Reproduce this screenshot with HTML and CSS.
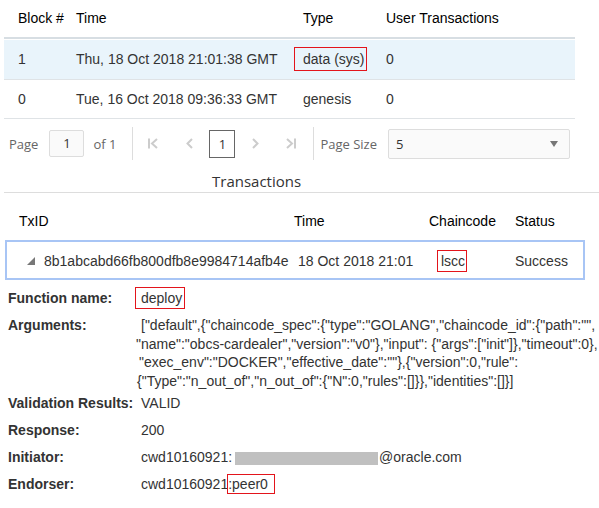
FILE: index.html
```html
<!DOCTYPE html>
<html>
<head>
  <title>Blocks</title>
  <link rel="stylesheet" href="styles.css">
</head>
<body>
  <table class="blocks">
    <colgroup>
      <col class="c-num">
      <col class="c-time">
      <col class="c-type">
      <col class="c-utx">
    </colgroup>
    <thead>
      <tr><th>Block #</th><th>Time</th><th>Type</th><th>User Transactions</th></tr>
    </thead>
    <tbody>
      <tr class="selected">
        <td>1</td>
        <td>Thu, 18 Oct 2018 21:01:38 GMT</td>
        <td><span class="mark mark-type">data (sys)</span></td>
        <td>0</td>
      </tr>
      <tr>
        <td>0</td>
        <td>Tue, 16 Oct 2018 09:36:33 GMT</td>
        <td>genesis</td>
        <td>0</td>
      </tr>
    </tbody>
  </table>

  <div class="pager">
    <span class="pager-label">Page</span>
    <div class="page-input">1</div>
    <span class="page-of">of 1</span>
    <span class="pager-sep sep-1"></span>
    <span class="pg-btn pg-first">
      <svg width="10" height="11" viewBox="0 0 10 11"><path d="M1 0.5v10M9 1L4 5.5l5 4.5" fill="none" stroke="#ccc" stroke-width="2"/></svg>
    </span>
    <span class="pg-btn pg-prev">
      <svg width="7" height="11" viewBox="0 0 7 11"><path d="M6 1L1.5 5.5 6 10" fill="none" stroke="#ccc" stroke-width="2"/></svg>
    </span>
    <span class="pg-current">1</span>
    <span class="pg-btn pg-next">
      <svg width="7" height="11" viewBox="0 0 7 11"><path d="M1 1l4.5 4.5L1 10" fill="none" stroke="#ccc" stroke-width="2"/></svg>
    </span>
    <span class="pg-btn pg-last">
      <svg width="10" height="11" viewBox="0 0 10 11"><path d="M9 0.5v10M1 1l5 4.5L1 10" fill="none" stroke="#ccc" stroke-width="2"/></svg>
    </span>
    <span class="pager-sep sep-2"></span>
    <span class="pager-label size-label">Page Size</span>
    <div class="size-select">
      <span>5</span>
      <span class="caret"></span>
    </div>
  </div>

  <div class="section-title">Transactions</div>

  <div class="tx-head">
    <span class="h-id">TxID</span>
    <span class="h-time">Time</span>
    <span class="h-code">Chaincode</span>
    <span class="h-status">Status</span>
  </div>
  <div class="tx-row">
    <svg class="expander" width="8" height="8" viewBox="0 0 8 8"><polygon points="8,0 8,8 0,8" fill="#777"/></svg>
    <span class="r-id">8b1abcabd66fb800dfb8e9984714afb4e</span>
    <span class="r-time">18 Oct 2018 21:01</span>
    <span class="r-code"><span class="mark mark-code">lscc</span></span>
    <span class="r-status">Success</span>
  </div>

  <div class="details">
    <div class="detail">
      <span class="detail-label">Function name:</span>
      <span><span class="mark mark-fn">deploy</span></span>
    </div>
    <div class="detail detail-args">
      <span class="detail-label">Arguments:</span>
      <div class="args">
        <span class="ln ln-1">["default",{"chaincode_spec":{"type":"GOLANG","chaincode_id":{"path":"",</span>
        <span class="ln">"name":"obcs-cardealer","version":"v0"},"input": {"args":["init"]},"timeout":0},</span>
        <span class="ln ln-3">"exec_env":"DOCKER","effective_date":""},{"version":0,"rule":</span>
        <span class="ln ln-4">{"Type":"n_out_of","n_out_of":{"N":0,"rules":[]}},"identities":[]}]</span>
      </div>
    </div>
    <div class="detail">
      <span class="detail-label">Validation Results:</span>
      <span>VALID</span>
    </div>
    <div class="detail">
      <span class="detail-label">Response:</span>
      <span>200</span>
    </div>
    <div class="detail">
      <span class="detail-label">Initiator:</span>
      <span>cwd10160921:<span class="redacted"></span>@oracle.com</span>
    </div>
    <div class="detail">
      <span class="detail-label">Endorser:</span>
      <span>cwd10160921:<span class="mark mark-peer">peer0</span></span>
    </div>
  </div>
</body>
</html>
```

FILE: styles.css
```css
body {
  margin: 0;
  font-family: "Liberation Sans", Arial, sans-serif;
  font-size: 14px;
  color: #333;
  background: #fff;
}

/* annotation boxes */
.mark {
  border: 1px solid #e3141b;
}
.mark-type {
  padding: 3px 2px 3px 8px;
  margin-left: -9px;
}
.mark-code {
  padding: 2px 1px 2px 3px;
  margin-left: -4px;
}
.mark-fn {
  padding: 2px 2px 2px 5px;
  margin-left: -6px;
}
.mark-peer {
  padding: 1px 6px 1px 4px;
  margin-left: -5px;
}

/* blocks table */
.blocks {
  margin-left: 4px;
  width: 571px;
  table-layout: fixed;
  border-collapse: separate;
  border-spacing: 0;
}
.c-num { width: 58px; }
.c-time { width: 227px; }
.c-type { width: 83px; }
.c-utx { width: 203px; }
.blocks th {
  text-align: left;
  font-weight: normal;
  color: #000;
  line-height: 16px;
  padding: 10px 0 11px 14px;
  border-bottom: 2px solid #d7dee3;
  white-space: nowrap;
}
.blocks td {
  line-height: 16px;
  padding: 11px 0 11px 14px;
  border-bottom: 1px solid #dfe3e6;
  white-space: nowrap;
}
.blocks tr.selected td {
  background-color: #e9f4fb;
  border-top: 1px solid #fff;
  padding-bottom: 12px;
}

/* pager */
.pager {
  display: flex;
  align-items: center;
  height: 33px;
  margin-top: 8px;
  padding-left: 9px;
  font-family: "Open Sans", sans-serif;
  font-size: 13px;
  color: #666;
}
.page-input {
  width: 35px;
  height: 27px;
  box-sizing: border-box;
  margin-left: 11px;
  border: 1px solid #ddd;
  border-radius: 2px;
  background-color: #fafafa;
  color: #333;
  text-align: center;
  line-height: 25px;
}
.page-of {
  margin-left: 9px;
}
.pager-sep {
  width: 1px;
  height: 33px;
  background-color: #ddd;
}
.sep-1 { margin-left: 16px; }
.sep-2 { margin-left: 17px; }
.pg-btn {
  display: flex;
  align-items: center;
}
.pg-first { margin-left: 15px; }
.pg-prev { margin-left: 28px; }
.pg-next { margin-left: 17px; }
.pg-last { margin-left: 27px; }
.pg-current {
  width: 26px;
  height: 28px;
  box-sizing: border-box;
  margin-left: 16px;
  border: 1px solid #666;
  color: #333;
  text-align: center;
  line-height: 26px;
}
.size-label {
  margin-left: 6px;
}
.size-select {
  display: flex;
  align-items: center;
  justify-content: space-between;
  width: 182px;
  height: 30px;
  box-sizing: border-box;
  margin-left: 11px;
  padding: 0 11px 0 7px;
  border: 1px solid #ddd;
  border-radius: 2px;
  background-color: #fafafa;
  color: #333;
}
.caret {
  width: 0;
  height: 0;
  border-left: 4px solid transparent;
  border-right: 4px solid transparent;
  border-top: 6px solid #777;
}

/* transactions */
.section-title {
  margin-left: 4px;
  padding: 11px 0 1px 208px;
  line-height: 20px;
  border-bottom: 1px solid #ddd;
  font-family: "Open Sans", sans-serif;
  font-size: 15px;
  color: #333;
}
.tx-head {
  display: flex;
  margin-left: 5px;
  padding: 20px 0 11px 0;
  line-height: 16px;
  color: #000;
}
.h-id { width: 275px; padding-left: 14px; }
.h-time { width: 135px; }
.h-code { width: 86px; }

.tx-row {
  display: flex;
  align-items: center;
  width: 580px;
  height: 40px;
  box-sizing: border-box;
  margin-left: 5px;
  border: 2px solid #a8c5f5;
  line-height: 16px;
  padding-top: 1px;
  white-space: nowrap;
}
.expander {
  margin-left: 20px;
  margin-top: 1px;
}
.r-id { width: 254px; margin-left: 9px; }
.r-time { width: 143px; }
.r-code { width: 74px; }

/* details */
.details {
  margin-top: 9px;
  padding-left: 8px;
}
.detail {
  display: grid;
  grid-template-columns: 133px 1fr;
  line-height: 18px;
  padding-bottom: 9px;
  white-space: nowrap;
}
.detail-label {
  font-weight: bold;
  color: #333;
}
.detail-args {
  line-height: 18.7px;
  padding-bottom: 3px;
}
.args {
  margin-left: -5px;
}
.ln {
  display: block;
}
.ln-1 { padding-left: 5px; }
.ln-3 { padding-left: 3px; }
.ln-4 { padding-left: 1px; }
.redacted {
  display: inline-block;
  width: 143px;
  height: 13px;
  margin: 0 1px 0 3px;
  background-color: #c0c0c0;
  vertical-align: -3px;
}
```
